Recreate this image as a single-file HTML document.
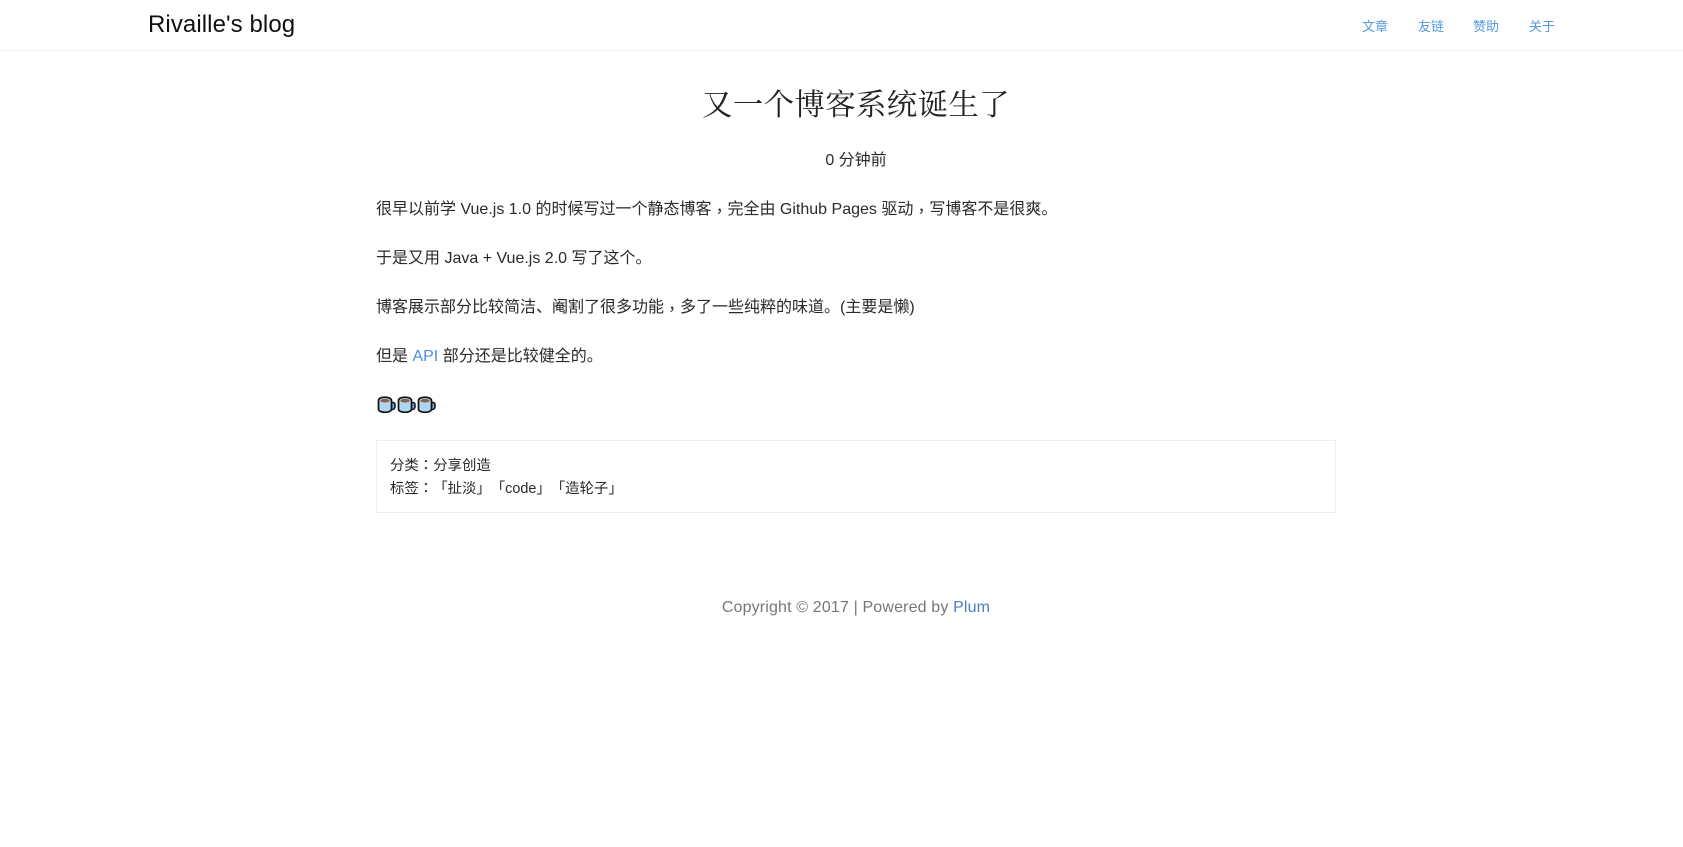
<!DOCTYPE html>
<html lang="zh">
<head>
<meta charset="utf-8">
<title>Rivaille's blog</title>
<style>
html,body{margin:0;padding:0;background:#fff;width:1683px;height:847px;overflow:hidden}
body{position:relative;font-family:"Liberation Sans","Noto Sans CJK SC",sans-serif;color:#222;text-spacing-trim:space-all;font-feature-settings:"chws" 0,"palt" 0}
a{text-decoration:none;color:#4a90d9}
.abs{position:absolute;white-space:nowrap}
.hdr{position:absolute;left:0;top:0;width:1683px;height:50px;border-bottom:1px solid #eee;box-sizing:content-box}
.logo{left:148px;top:7px;font-size:24px;line-height:36px;color:#111;letter-spacing:.08px}
.nav{top:17px;font-size:13px;line-height:20px;color:#559ade}
h1{position:absolute;margin:0;left:376px;width:960px;top:82px;text-align:center;font-weight:400;font-size:30.4px;letter-spacing:.4px;line-height:46px;color:#222;font-family:"Liberation Serif","Noto Serif CJK SC",serif}
.time{left:376px;width:960px;top:147px;padding-top:2px;text-align:center;font-size:16px;line-height:24px;color:#2a2a2a}
p{position:absolute;margin:0;left:376px;font-size:16px;line-height:26px;white-space:nowrap;color:#2a2a2a}
.c{font-family:"Noto Sans CJK TC",sans-serif;line-height:0}
p .c{position:relative;top:3px}
.meta{position:absolute;left:376px;top:440px;width:960px;height:73px;box-sizing:border-box;border:1px solid #eee}
.meta div{position:absolute;left:13px;font-size:14.4px;line-height:22px;white-space:nowrap;color:#2a2a2a}
.foot{left:376px;width:960px;top:596px;text-align:center;font-size:16px;line-height:24px;color:#777;letter-spacing:.15px}
.foot a{color:#4a7fc4}
svg.mug{position:absolute;top:396px;width:19px;height:18px}
</style>
</head>
<body>
<div class="hdr"></div>
<div class="abs logo">Rivaille's blog</div>
<a class="abs nav" style="left:1362px" href="#">文章</a>
<a class="abs nav" style="left:1418px" href="#">友链</a>
<a class="abs nav" style="left:1473px" href="#">赞助</a>
<a class="abs nav" style="left:1529px" href="#">关于</a>

<h1>又一个博客系统诞生了</h1>
<div class="abs time">0 分钟前</div>

<p style="top:197px">很早以前学 Vue.js 1.0 的时候写过一个静态博客<span class="c" lang="zh-Hant">，</span>完全由 Github Pages 驱动<span class="c" lang="zh-Hant">，</span>写博客不是很爽。</p>
<p style="top:246px">于是又用 Java + Vue.js 2.0 写了这个。</p>
<p style="top:295px">博客展示部分比较简洁、阉割了很多功能<span class="c" lang="zh-Hant">，</span>多了一些纯粹的味道。(主要是懒)</p>
<p style="top:344px">但是 <a href="#">API</a> 部分还是比较健全的。</p>

<svg class="mug" style="left:377px" viewBox="0 0 19 18"><path d="M14 6.500h2a2 2 0 0 1 2 2v2.500a2.500 2.500 0 0 1-2.500 2.500H14" fill="#6fa3cf" stroke="#111" stroke-width="1.500"/><path d="M1.500 4.500C1.500 2.500 4 1.200 8 1.200s6.500 1.300 6.500 3.300v8.500c0 2-2.500 3.300-6.500 3.300s-6.500-1.300-6.500-3.300z" fill="#aed6f1" stroke="#111" stroke-width="1.700"/><ellipse cx="8" cy="4.700" rx="4.600" ry="1.900" fill="#8f6048"/></svg>
<svg class="mug" style="left:397px" viewBox="0 0 19 18"><path d="M14 6.500h2a2 2 0 0 1 2 2v2.500a2.500 2.500 0 0 1-2.500 2.500H14" fill="#6fa3cf" stroke="#111" stroke-width="1.500"/><path d="M1.500 4.500C1.500 2.500 4 1.200 8 1.200s6.500 1.300 6.500 3.300v8.500c0 2-2.500 3.300-6.500 3.300s-6.500-1.300-6.500-3.300z" fill="#aed6f1" stroke="#111" stroke-width="1.700"/><ellipse cx="8" cy="4.700" rx="4.600" ry="1.900" fill="#8f6048"/></svg>
<svg class="mug" style="left:417px" viewBox="0 0 19 18"><path d="M14 6.500h2a2 2 0 0 1 2 2v2.500a2.500 2.500 0 0 1-2.500 2.500H14" fill="#6fa3cf" stroke="#111" stroke-width="1.500"/><path d="M1.500 4.500C1.500 2.500 4 1.200 8 1.200s6.500 1.300 6.500 3.300v8.500c0 2-2.500 3.300-6.500 3.300s-6.500-1.300-6.500-3.300z" fill="#aed6f1" stroke="#111" stroke-width="1.700"/><ellipse cx="8" cy="4.700" rx="4.600" ry="1.900" fill="#8f6048"/></svg>

<div class="meta">
<div style="top:14px">分类<span class="c" lang="zh-Hant">：</span>分享创造</div>
<div style="top:37px">标签<span class="c" lang="zh-Hant">：</span>「扯淡」「code」「造轮子」</div>
</div>

<div class="abs foot">Copyright © 2017 | Powered by <a href="#">Plum</a></div>
</body>
</html>
